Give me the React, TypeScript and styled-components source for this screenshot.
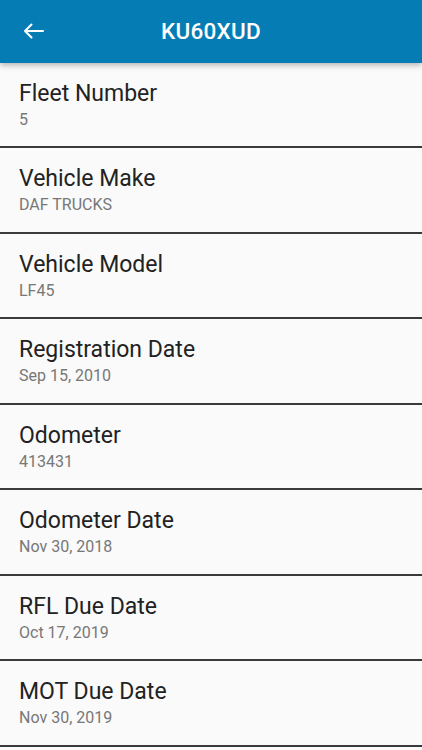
import styled, { createGlobalStyle } from "styled-components";

const GlobalStyle = createGlobalStyle`
  html, body {
    margin: 0;
    padding: 0;
    background: #fafafa;
  }
  body {
    font-family: Roboto, "Noto Sans", sans-serif;
  }
`;

const Screen = styled.div`
  width: 422px;
  height: 750px;
  overflow: hidden;
  background: #fafafa;
  display: flex;
  flex-direction: column;
`;

const AppBar = styled.header`
  position: relative;
  z-index: 2;
  height: 62.5px;
  flex-shrink: 0;
  background: #067cb4;
  display: flex;
  align-items: center;
  justify-content: center;
  box-shadow: 0 2px 6px rgba(0, 0, 0, 0.3);
`;

const BackButton = styled.button`
  position: absolute;
  left: 17px;
  top: 15px;
  width: 33px;
  height: 32px;
  padding: 0;
  border: none;
  background: transparent;
  display: flex;
  align-items: center;
  justify-content: center;
`;

const Title = styled.h1`
  margin: 0;
  color: #ffffff;
  font-size: 22.5px;
  font-weight: 500;
  letter-spacing: 0.3px;
`;

const List = styled.div`
  display: flex;
  flex-direction: column;
`;

const Row = styled.div`
  box-sizing: border-box;
  height: 85.5px;
  flex-shrink: 0;
  padding: 17px 19px 0;
  border-bottom: 2px solid #3a3a3a;
  display: flex;
  flex-direction: column;
  gap: 4px;
`;

const Label = styled.div`
  font-size: 23px;
  line-height: 27px;
  color: #222222;
`;

const Value = styled.div`
  font-size: 16px;
  line-height: 18px;
  color: #777777;
`;

const details = [
  { label: "Fleet Number", value: "5" },
  { label: "Vehicle Make", value: "DAF TRUCKS" },
  { label: "Vehicle Model", value: "LF45" },
  { label: "Registration Date", value: "Sep 15, 2010" },
  { label: "Odometer", value: "413431" },
  { label: "Odometer Date", value: "Nov 30, 2018" },
  { label: "RFL Due Date", value: "Oct 17, 2019" },
  { label: "MOT Due Date", value: "Nov 30, 2019" },
];

const BackArrow = () => (
  <svg width="22" height="18" viewBox="0 0 22 18" fill="none">
    <path
      d="M20 9H2M8.5 2.5L2 9L8.5 15.5"
      stroke="#ffffff"
      strokeWidth="2.1"
      strokeLinecap="round"
      strokeLinejoin="round"
    />
  </svg>
);

export default function App() {
  return (
    <>
      <GlobalStyle />
      <Screen>
        <AppBar>
          <BackButton aria-label="Back">
            <BackArrow />
          </BackButton>
          <Title>KU60XUD</Title>
        </AppBar>
        <List>
          {details.map((d) => (
            <Row key={d.label}>
              <Label>{d.label}</Label>
              <Value>{d.value}</Value>
            </Row>
          ))}
        </List>
      </Screen>
    </>
  );
}
